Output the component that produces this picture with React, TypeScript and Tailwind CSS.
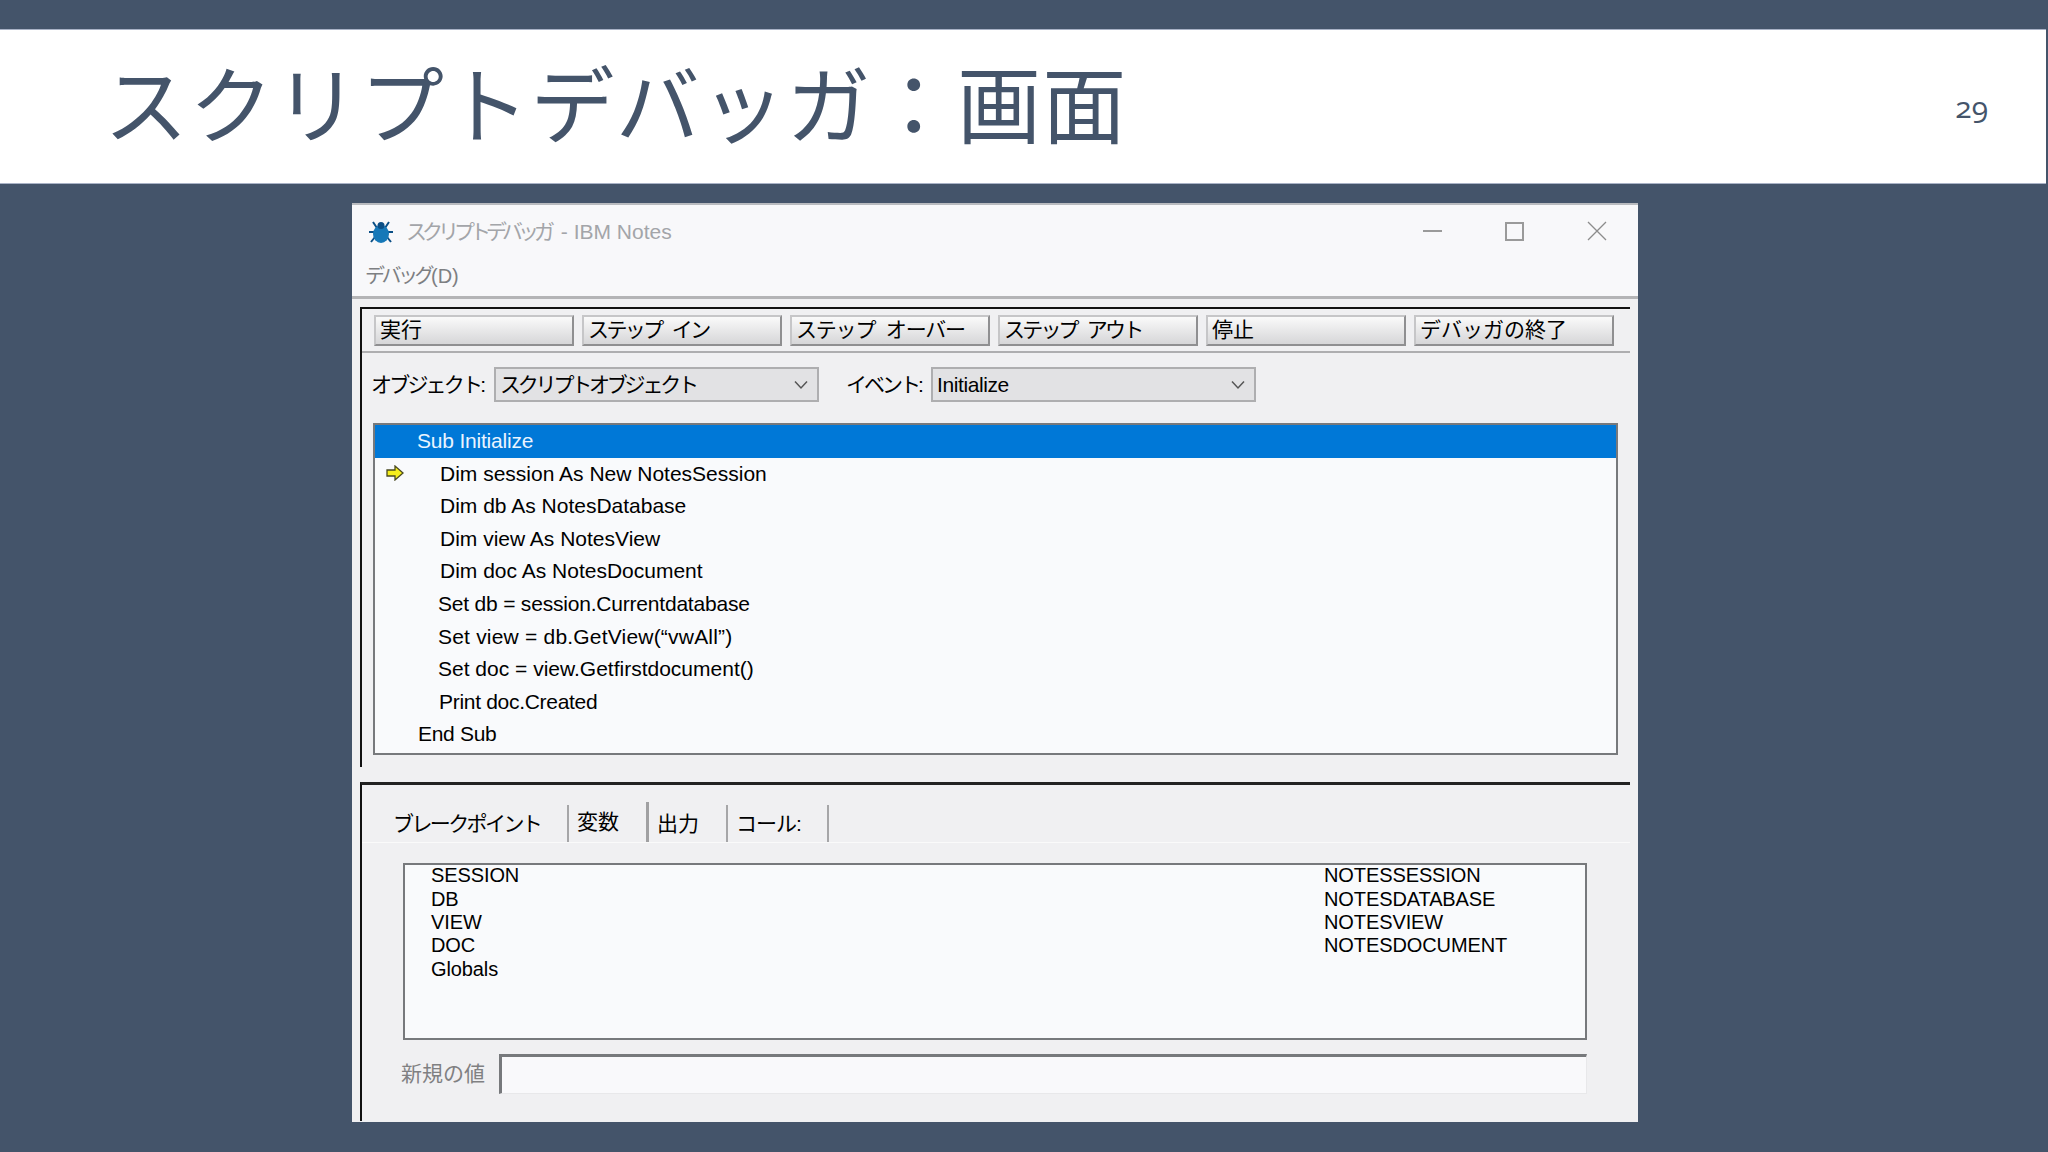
const UI_FONT = "font-['Liberation_Sans','Noto_Sans_CJK_JP',sans-serif]";

const toolbarButtons = [
  { label: "実行", tracking: "tracking-normal" },
  { label: "ステップ イン", tracking: "tracking-[-2.6px] [word-spacing:7px]" },
  { label: "ステップ オーバー", tracking: "tracking-[-1.2px] [word-spacing:6px]" },
  { label: "ステップ アウト", tracking: "tracking-[-2.8px] [word-spacing:7px]" },
  { label: "停止", tracking: "tracking-normal" },
  { label: "デバッガの終了", tracking: "tracking-normal" },
];

const codeLines = [
  { text: "Dim session As New NotesSession", indent: "pl-[65px]" },
  { text: "Dim db As NotesDatabase", indent: "pl-[65px]" },
  { text: "Dim view As NotesView", indent: "pl-[65px]" },
  { text: "Dim doc As NotesDocument", indent: "pl-[65px]" },
  { text: "Set db = session.Currentdatabase", indent: "pl-[63px] tracking-[-0.2px]" },
  { text: "Set view = db.GetView(“vwAll”)", indent: "pl-[63px] tracking-[0.2px]" },
  { text: "Set doc = view.Getfirstdocument()", indent: "pl-[63px]" },
  { text: "Print doc.Created", indent: "pl-[64px] tracking-[-0.3px]" },
  { text: "End Sub", indent: "pl-[43px] tracking-[-0.3px]" },
];

const variables = [
  ["SESSION", "NOTESSESSION"],
  ["DB", "NOTESDATABASE"],
  ["VIEW", "NOTESVIEW"],
  ["DOC", "NOTESDOCUMENT"],
  ["Globals", ""],
];

function BugIcon() {
  return (
    <svg width="26" height="26" viewBox="0 0 26 26" aria-hidden="true">
      <g stroke="#0b4f86" strokeWidth="2" fill="none">
        <path d="M9 9 5 3M17 9l4-6M6 13H1M20 13h5M7 18l-4 5M19 18l4 5" />
      </g>
      <ellipse cx="13" cy="15" rx="8" ry="9" fill="#1678b8" />
      <circle cx="13" cy="6.5" r="3.5" fill="#0b4f86" />
    </svg>
  );
}

function ArrowIcon() {
  return (
    <svg width="18" height="16" viewBox="0 0 18 16" aria-hidden="true">
      <path d="M1 5h8V1l8 7-8 7v-4H1z" fill="#f6ee1c" stroke="#4a4a20" strokeWidth="1.3" />
    </svg>
  );
}

function Combo({ value, className }: { value: string; className: string }) {
  return (
    <div className={`flex h-[35px] items-center justify-between border-2 border-[#aeaeb0] bg-[#e2e2e4] pl-[4px] pr-[9px] text-[21px] text-black ${className}`}>
      <span className="whitespace-nowrap">{value}</span>
      <svg width="14" height="10" viewBox="0 0 14 10" aria-hidden="true">
        <path d="M1 1.5 7 8l6-6.5" fill="none" stroke="#555" strokeWidth="1.5" />
      </svg>
    </div>
  );
}

export default function App() {
  return (
    <div className={`h-[1152px] w-[2048px] overflow-hidden bg-[#44546a] pt-[29px] ${UI_FONT}`}>
      <header className="mr-[2px] flex h-[155px] items-center justify-between border-y border-[#a9b2c6] bg-white pl-[104px] pr-[58px]">
        <h1 className="whitespace-nowrap pb-[12px] font-['Noto_Sans_CJK_JP',sans-serif] text-[84px] font-normal leading-none tracking-[1.3px] text-[#44546a]">
          スクリプトデバッガ：画面
        </h1>
        <span className="font-['Open_Sans',sans-serif] text-[30px] text-[#44546a] oldstyle-nums">29</span>
      </header>

      <div className="ml-[352px] mt-[19px] h-[919px] w-[1286px] border-t-2 border-[#b9bbbf] bg-[#f0f0f2]">
        {/* title + menu */}
        <div className="h-[91px] bg-[#f8f8fa]">
          <div className="flex h-[54px] items-center pl-[16px] pr-[31px]">
            <BugIcon />
            <span className="ml-[12px] whitespace-nowrap text-[21px] text-[#a3a5a9]">
              <span className="mr-[5px] tracking-[-5px]">スクリプトデバッガ</span> - IBM Notes
            </span>
            <div className="ml-auto flex items-center pb-[2px]">
              <div className="h-[2px] w-[19px] bg-[#9a9a9a]" />
              <div className="ml-[63px] h-[19px] w-[19px] border-2 border-[#9a9a9a]" />
              <svg className="ml-[63px]" width="20" height="20" viewBox="0 0 20 20" aria-hidden="true">
                <path d="M1 1l18 18M19 1 1 19" stroke="#8c8c8c" strokeWidth="1.3" />
              </svg>
            </div>
          </div>
          <div className="pl-[13px] pt-[2px] text-[20px] text-[#7d7f82]">
            <span className="tracking-[-3.5px]">デバッグ</span>(D)
          </div>
        </div>
        <div className="h-[3px] bg-[#b4b4b6]" />

        {/* upper pane */}
        <div className="ml-[8px] mt-[8px] h-[460px] w-[1270px] border-l-2 border-t-2 border-l-[#111] border-t-[#111]">
          <div className="flex h-[44px] items-start gap-[8px] border-b-2 border-[#aeaeb0] pl-[12px] pt-[6px]">
            {toolbarButtons.map((button) => (
              <div
                key={button.label}
                className={`flex h-[31px] w-[200px] items-center whitespace-pre border-2 border-[#c6c6c8] border-b-[#8f8f91] border-r-[#8f8f91] bg-gradient-to-b from-[#fafafa] to-[#d6d6d8] pb-[2px] pl-[4px] text-[21px] text-black ${button.tracking}`}
              >
                {button.label}
              </div>
            ))}
          </div>

          <div className="flex items-center pl-[9px] pt-[14px] text-[21px] text-black">
            <span className="w-[123px] whitespace-nowrap tracking-[-2.8px]">オブジェクト:</span>
            <Combo value="スクリプトオブジェクト" className="w-[325px] tracking-[-3.2px]" />
            <span className="ml-[27px] w-[85px] whitespace-nowrap tracking-[-3px]">イベント:</span>
            <Combo value="Initialize" className="w-[325px] tracking-[-0.4px]" />
          </div>

          <div className="ml-[11px] mt-[21px] h-[332px] w-[1245px] border-2 border-[#77797c] bg-[#f9fafc] text-[21px] text-black">
            <div className="flex h-[33px] items-center bg-[#0078d7] pb-[2px] pl-[42px] tracking-[-0.2px] text-[#eaf4ff]">Sub Initialize</div>
            {codeLines.map((line, i) => (
              <div key={line.text} className={`relative flex h-[32.6px] items-center pb-[2px] ${line.indent}`}>
                {i === 0 ? (
                  <span className="absolute left-[11px] top-[7px] flex">
                    <ArrowIcon />
                  </span>
                ) : null}
                {line.text}
              </div>
            ))}
          </div>
        </div>

        {/* lower pane */}
        <div className="ml-[8px] mt-[15px] h-[339px] w-[1270px] border-l-2 border-t-[3px] border-l-[#111] border-t-[#222]">
          <div className="flex h-[58px] items-end border-b border-[#fafafa] pl-[29px] text-[21px] text-black">
            <div className="flex h-[37px] w-[178px] items-center whitespace-nowrap border-r-2 border-[#a6a6a8] pl-[2px] tracking-[-2.6px]">ブレークポイント</div>
            <div className="flex h-[40px] w-[80px] items-center border-r-[3px] border-[#a0a0a2] pl-[8px]">変数</div>
            <div className="flex h-[37px] w-[79px] items-center border-r-2 border-[#a6a6a8] pl-[8px]">出力</div>
            <div className="flex h-[37px] w-[101px] items-center whitespace-nowrap border-r-2 border-[#a6a6a8] pl-[8px] tracking-[-1px]">コール:</div>
          </div>

          <div className="ml-[41px] mt-[20px] h-[177px] w-[1184px] border-2 border-[#77797c] bg-[#f9fafc] text-[20px] text-black">
            {variables.map(([name, type]) => (
              <div key={name} className="flex h-[23.4px] items-center pb-[3px] leading-none tracking-[-0.1px]">
                <span className="w-[919px] pl-[26px]">{name}</span>
                <span>{type}</span>
              </div>
            ))}
          </div>

          <div className="mt-[14px] flex items-center pl-[39px]">
            <span className="w-[98px] text-[21px] text-[#808082]">新規の値</span>
            <div className="h-[40px] w-[1088px] border-l-[3px] border-t-[3px] border-b border-r border-l-[#77797c] border-t-[#77797c] border-b-[#e8e8ea] border-r-[#e8e8ea] bg-[#f9f9fb]" />
          </div>
        </div>
      </div>
    </div>
  );
}
